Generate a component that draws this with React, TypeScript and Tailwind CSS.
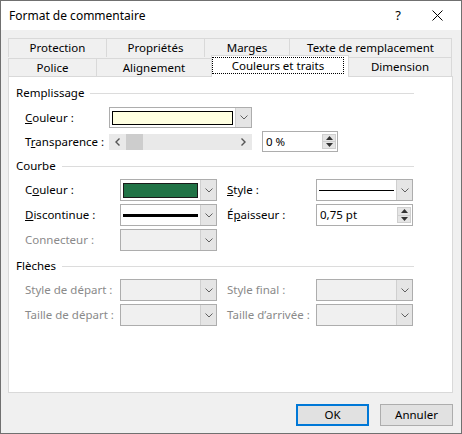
import React from 'react';

const font = { fontFamily: "'Noto Sans', 'DejaVu Sans', sans-serif" };

const Chevron: React.FC = () => (
  <svg width="8" height="5" viewBox="0 0 8 5" className="block">
    <polyline points="0.5,0.5 4,4 7.5,0.5" fill="none" stroke="#606060" strokeWidth="1" />
  </svg>
);

const Combo: React.FC<{ w: number; h: number; disabled?: boolean; children?: React.ReactNode }> = ({ disabled, children, w, h }) => (
  <div
    className={`flex border border-[#adadad] ${disabled ? 'bg-[#f0f0f0]' : 'bg-white'}`}
    style={{ width: w, height: h }}
  >
    <div className="flex-1 flex items-center px-[2px] overflow-hidden">{children}</div>
    <div className="w-[16px] flex items-center justify-center bg-[#e5e5e5] border-l border-[#cfcfcf]">
      <Chevron />
    </div>
  </div>
);

const Spin: React.FC<{ w: number; h: number; value: string }> = ({ w, h, value }) => (
  <div className="flex border border-[#adadad] bg-white" style={{ width: w, height: h }}>
    <div className="flex-1 flex items-center pl-[3px] text-[11.5px]">{value}</div>
    <div className="w-[14px] my-[2px] mr-[1px] flex flex-col bg-[#e5e5e5] border border-[#cfcfcf]">
      <div className="flex-1 flex items-center justify-center border-b border-[#cfcfcf]">
        <svg width="7" height="4" viewBox="0 0 7 4"><polygon points="0,4 3.5,0 7,4" fill="#333" /></svg>
      </div>
      <div className="flex-1 flex items-center justify-center">
        <svg width="7" height="4" viewBox="0 0 7 4"><polygon points="0,0 3.5,4 7,0" fill="#333" /></svg>
      </div>
    </div>
  </div>
);

const Header: React.FC<{ label: string; mt: string }> = ({ label, mt }) => (
  <div className={`flex items-center h-[14px] w-[398px] ${mt}`}>
    <span className="text-[11.5px] leading-none">{label}</span>
    <div className="flex-1 h-px bg-[#dcdcdc] ml-[6px]" />
  </div>
);

const Label: React.FC<{ w: number; disabled?: boolean; children: React.ReactNode }> = ({ w, disabled, children }) => (
  <div className={`text-[11.5px] shrink-0 ${disabled ? 'text-[#8a8a8a]' : 'text-black'}`} style={{ width: w }}>
    {children}
  </div>
);

const TabCell: React.FC<{ w: number; label: string }> = ({ w, label }) => (
  <div
    className="flex items-center justify-center border-t border-l border-[#d9d9d9] text-[11.5px] bg-[#f0f0f0] last:border-r"
    style={{ width: w }}
  >
    {label}
  </div>
);

export default function App() {
  return (
    <div className="w-[462px] h-[434px] border border-[#707070] bg-[#f0f0f0] flex flex-col text-black" style={font}>
      {/* title bar */}
      <div className="h-[29px] bg-white flex items-center pl-[8px] shrink-0">
        <span className="text-[12px] flex-1">Format de commentaire</span>
        <span className="text-[13px] w-[20px] text-center mr-[24px]">?</span>
        <svg width="11" height="11" viewBox="0 0 11 11" className="mr-[18px]">
          <line x1="0.5" y1="0.5" x2="10.5" y2="10.5" stroke="#000" strokeWidth="1" />
          <line x1="10.5" y1="0.5" x2="0.5" y2="10.5" stroke="#000" strokeWidth="1" />
        </svg>
      </div>

      {/* tabs */}
      <div className="ml-[7px] mt-[8px] w-[444px]">
        <div className="flex h-[19px]">
          <TabCell w={98} label="Protection" />
          <TabCell w={98} label="Propriétés" />
          <TabCell w={85} label="Marges" />
          <TabCell w={163} label="Texte de remplacement" />
        </div>
        <div className="flex h-[19px] items-end">
          <TabCell w={88} label="Police" />
          <TabCell w={115} label="Alignement" />
          <div className="relative z-10 -mb-[1px] h-[22px] w-[138px] bg-white border-t border-l border-r border-[#d9d9d9] py-[1px] pb-[3px] pr-[4px]">
            <div className="h-full border border-dotted border-black flex items-center justify-center text-[11.5px]">
              Couleurs et traits
            </div>
          </div>
          <div className="flex items-center justify-center h-full w-[103px] border-t border-r border-[#d9d9d9] text-[11.5px]">
            Dimension
          </div>
        </div>
      </div>

      {/* panel */}
      <div className="ml-[7px] w-[445px] h-[317px] bg-white border border-[#d9d9d9] pl-[7px] pt-[9px] flex flex-col">
        <Header label="Remplissage" mt="" />
        <div className="flex items-center h-[21px] mt-[7px] pl-[9px]">
          <Label w={84}><span className="underline">C</span>ouleur :</Label>
          <Combo w={143} h={21}>
            <div className="w-[121px] h-[14px] bg-[#ffffe1] border border-black" />
          </Combo>
        </div>
        <div className="flex items-center h-[21px] mt-[3px] pl-[9px]">
          <Label w={84}>T<span className="underline">r</span>ansparence :</Label>
          <div className="w-[143px] h-[16px] bg-[#e9e9e9] flex items-center">
            <div className="w-[17px] flex justify-center">
              <svg width="5" height="8" viewBox="0 0 5 8"><polyline points="4.5,0.5 1,4 4.5,7.5" fill="none" stroke="#555" strokeWidth="1.4" /></svg>
            </div>
            <div className="w-[17px] h-full bg-[#cdcdcd]" />
            <div className="flex-1" />
            <div className="w-[17px] flex justify-center">
              <svg width="5" height="8" viewBox="0 0 5 8"><polyline points="0.5,0.5 4,4 0.5,7.5" fill="none" stroke="#555" strokeWidth="1.4" /></svg>
            </div>
          </div>
          <div className="ml-[10px]">
            <Spin w={76} h={21} value="0 %" />
          </div>
        </div>

        <Header label="Courbe" mt="mt-[7px]" />
        <div className="flex items-center h-[22px] mt-[6px] pl-[9px]">
          <Label w={95}>C<span className="underline">o</span>uleur :</Label>
          <Combo w={97} h={22}>
            <div className="w-[77px] h-[15px] bg-[#217346] border border-[#1a1a1a]" />
          </Combo>
          <div className="ml-[10px]">
            <Label w={89}><span className="underline">S</span>tyle :</Label>
          </div>
          <Combo w={97} h={22}>
            <div className="w-[79px] h-px bg-black" />
          </Combo>
        </div>
        <div className="flex items-center h-[22px] mt-[3px] pl-[9px]">
          <Label w={95}><span className="underline">D</span>iscontinue :</Label>
          <Combo w={97} h={22}>
            <div className="w-[78px] h-[3px] bg-black" />
          </Combo>
          <div className="ml-[10px]">
            <Label w={89}>É<span className="underline">p</span>aisseur :</Label>
          </div>
          <Spin w={97} h={22} value="0,75 pt" />
        </div>
        <div className="flex items-center h-[22px] mt-[3px] pl-[9px]">
          <Label w={95} disabled>Connecteur :</Label>
          <Combo w={97} h={22} disabled />
        </div>

        <Header label="Flèches" mt="mt-[8px]" />
        <div className="flex items-center h-[22px] mt-[6px] pl-[9px]">
          <Label w={95} disabled>Style de départ :</Label>
          <Combo w={97} h={22} disabled />
          <div className="ml-[10px]">
            <Label w={89} disabled>Style final :</Label>
          </div>
          <Combo w={97} h={22} disabled />
        </div>
        <div className="flex items-center h-[22px] mt-[3px] pl-[9px]">
          <Label w={95} disabled>Taille de départ :</Label>
          <Combo w={97} h={22} disabled />
          <div className="ml-[10px]">
            <Label w={89} disabled>Taille d’arrivée :</Label>
          </div>
          <Combo w={97} h={22} disabled />
        </div>
      </div>

      {/* buttons */}
      <div className="flex justify-end mt-[11px] mr-[8px] gap-[11px]">
        <button className="w-[73px] h-[22px] bg-[#e1e1e1] border-2 border-[#0078d7] text-[11.5px]">OK</button>
        <button className="w-[73px] h-[22px] bg-[#e1e1e1] border border-[#adadad] text-[11.5px]">Annuler</button>
      </div>
    </div>
  );
}
